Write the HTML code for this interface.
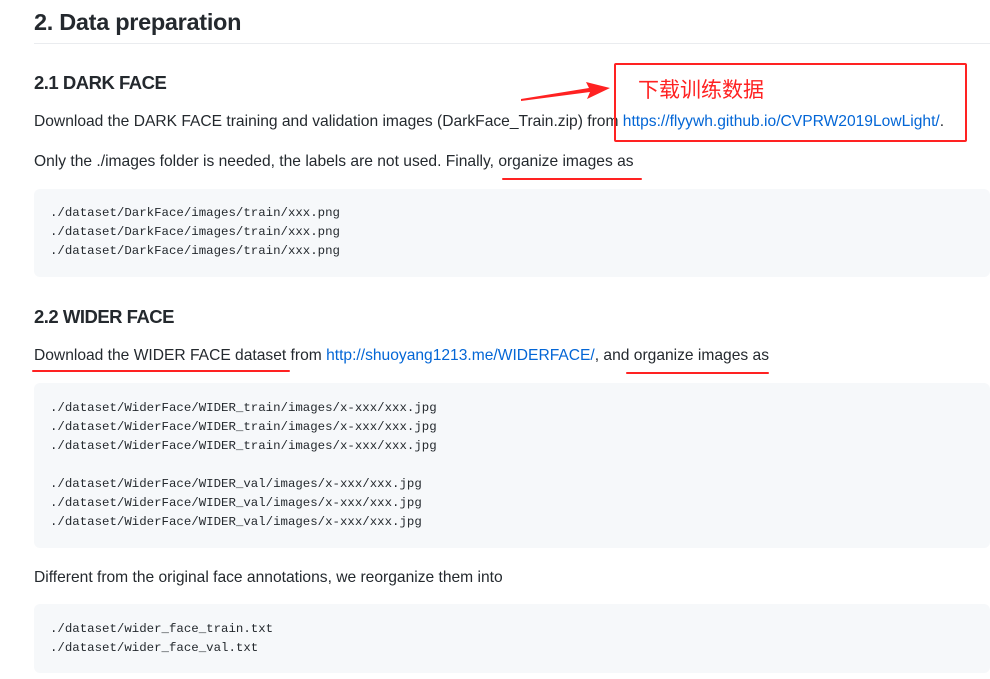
<!DOCTYPE html>
<html><head><meta charset="utf-8"><style>
body{margin:0;width:990px;height:679px;background:#fff;position:relative;overflow:hidden;font-family:"Liberation Sans",sans-serif;color:#24292e}
.a{position:absolute;white-space:nowrap}
.p{font-size:15.6px;line-height:20px}
.h3{font-size:18.5px;font-weight:bold;letter-spacing:-0.5px}
.pre{position:absolute;left:34px;right:0;background:#f6f8fa;border-radius:6px}
.c{position:absolute;left:50px;font-family:"Liberation Mono",monospace;font-size:12.4px;line-height:19px;white-space:pre;color:#24292e}
a{color:#0366d6;text-decoration:none}
.u{position:absolute;height:2px;background:#f22;border-radius:1px}
</style></head><body>
<div class="a" style="left:34px;top:9px;font-size:23.5px;font-weight:bold;letter-spacing:-0.3px">2. Data preparation</div>
<div style="position:absolute;left:34px;right:0;top:43px;height:1px;background:#eaecef"></div>
<div class="a h3" style="left:34px;top:72px">2.1 DARK FACE</div>
<div class="a p" style="left:34px;top:112px">Download the DARK FACE training and validation images (DarkFace_Train.zip) from <a>https://flyywh.github.io/CVPRW2019LowLight/</a>.</div>
<div class="a p" style="left:34px;top:152px">Only the ./images folder is needed, the labels are not used. Finally, organize images as</div>
<div class="pre" style="top:189px;height:88px"></div>
<div class="c" style="top:204px">./dataset/DarkFace/images/train/xxx.png
./dataset/DarkFace/images/train/xxx.png
./dataset/DarkFace/images/train/xxx.png</div>
<div class="a h3" style="left:34px;top:306px">2.2 WIDER FACE</div>
<div class="a p" style="left:34px;top:346px">Download the WIDER FACE dataset from <a>http://shuoyang1213.me/WIDERFACE/</a>, and organize images as</div>
<div class="pre" style="top:383px;height:165px"></div>
<div class="c" style="top:399px">./dataset/WiderFace/WIDER_train/images/x-xxx/xxx.jpg
./dataset/WiderFace/WIDER_train/images/x-xxx/xxx.jpg
./dataset/WiderFace/WIDER_train/images/x-xxx/xxx.jpg

./dataset/WiderFace/WIDER_val/images/x-xxx/xxx.jpg
./dataset/WiderFace/WIDER_val/images/x-xxx/xxx.jpg
./dataset/WiderFace/WIDER_val/images/x-xxx/xxx.jpg</div>
<div class="a p" style="left:34px;top:568px">Different from the original face annotations, we reorganize them into</div>
<div class="pre" style="top:604px;height:69px"></div>
<div class="c" style="top:620px">./dataset/wider_face_train.txt
./dataset/wider_face_val.txt</div>
<div style="position:absolute;left:614px;top:63px;width:349px;height:75px;border:2px solid #f22;border-radius:2px"></div>
<div class="a" style="left:638px;top:75px;font-size:21px;color:#f22;font-family:'Noto Sans CJK SC',sans-serif;line-height:28px">下载训练数据</div>
<svg style="position:absolute;left:0;top:0" width="990" height="679"><polygon points="521,101 590,92 587,99 610,88 586,82 589,88 521,99" fill="#f22"/></svg>
<div class="u" style="left:502px;top:178px;width:140px"></div>
<div class="u" style="left:32px;top:370px;width:258px"></div>
<div class="u" style="left:626px;top:372px;width:143px"></div>
</body></html>
